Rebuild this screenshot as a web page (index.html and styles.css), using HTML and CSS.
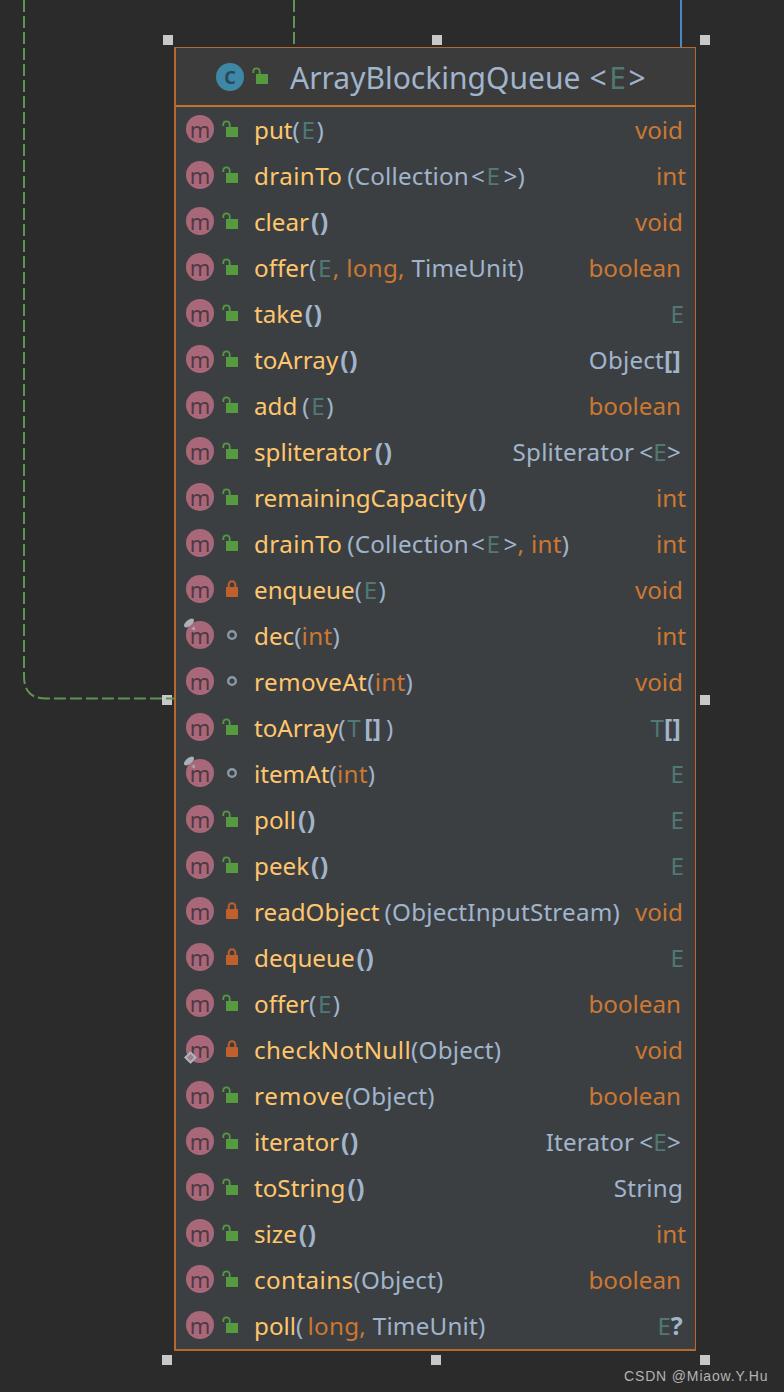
FILE: index.html
```html
<!DOCTYPE html>
<html lang="en">
<head>
  <meta charset="UTF-8" />
  <meta name="viewport" content="width=device-width, initial-scale=1.0"/>
  <title>ArrayBlockingQueue</title>
  <link rel="stylesheet" href="styles.css">
</head>
<body>
  <svg class="defs" width="0" height="0">
    <symbol id="open" viewBox="0 0 18 18">
      <rect x="4" y="7" width="12" height="10" fill="#559a3e"/>
      <path d="M1.3 6V4.5a3.2 3.2 0 0 1 6.4 0V7" fill="none" stroke="#559a3e" stroke-width="1.8"/>
    </symbol>
    <symbol id="closed" viewBox="0 0 18 18">
      <rect x="4" y="7" width="12" height="10" rx="1" fill="#c0602c"/>
      <path d="M6.7 7.5V4.5a3.3 3.3 0 0 1 6.6 0V7.5" fill="none" stroke="#c0602c" stroke-width="2"/>
    </symbol>
    <symbol id="pkg" viewBox="0 0 18 18">
      <circle cx="10" cy="9" r="3.8" fill="none" stroke="#8b99a5" stroke-width="2.4"/>
    </symbol>
  </svg>

  <div class="canvas">
    <span class="handle h1"></span>
    <span class="handle h2"></span>
    <span class="handle h3"></span>
    <span class="handle h4"></span>
    <span class="handle h5"></span>
    <span class="handle h6"></span>
    <span class="handle h7"></span>
    <span class="handle h8"></span>

    <svg class="edges" width="784" height="1392">
      <path class="edge-green" d="M24 0V676C24 690 30 698.5 46 698.5H175"/>
      <path class="edge-green" d="M294 0V47"/>
      <path class="edge-blue" d="M681 0V47"/>
    </svg>

    <div class="node">
      <div class="node-head">
        <span class="class-icon">C</span>
        <svg class="vis head-vis"><use href="#open"/></svg>
        <span class="title">ArrayBlockingQueue<span class="p title-lt">&lt;</span><span class="g title-e">E</span><span class="p">&gt;</span></span>
      </div>
      <div class="rows">
        <div class="row"><span class="m">m</span><svg class="vis"><use href="#open"/></svg><span class="sig"><span class="n">put</span><span class="p">(</span><span class="g">E</span><span class="p">)</span></span><span class="ret">void</span></div>
        <div class="row"><span class="m">m</span><svg class="vis"><use href="#open"/></svg><span class="sig"><span class="n wide">drainTo</span><span class="p sp">(Collection</span><span class="p lt">&lt;</span><span class="g">E</span><span class="p gt">&gt;)</span></span><span class="ret ret-int">int</span></div>
        <div class="row"><span class="m">m</span><svg class="vis"><use href="#open"/></svg><span class="sig"><span class="n">clear</span><span class="p b">()</span></span><span class="ret">void</span></div>
        <div class="row"><span class="m">m</span><svg class="vis"><use href="#open"/></svg><span class="sig"><span class="n">offer</span><span class="p">(</span><span class="g">E</span><span class="k">, long, </span><span class="p">TimeUnit)</span></span><span class="ret ret-bool">boolean</span></div>
        <div class="row"><span class="m">m</span><svg class="vis"><use href="#open"/></svg><span class="sig"><span class="n">take</span><span class="p b">()</span></span><span class="ret g">E</span></div>
        <div class="row"><span class="m">m</span><svg class="vis"><use href="#open"/></svg><span class="sig"><span class="n">toArray</span><span class="p b">()</span></span><span class="ret ret-bool p">Object<span class="b">[]</span></span></div>
        <div class="row"><span class="m">m</span><svg class="vis"><use href="#open"/></svg><span class="sig"><span class="n">add</span><span class="p sp">(</span><span class="g">E</span><span class="p">)</span></span><span class="ret ret-bool">boolean</span></div>
        <div class="row"><span class="m">m</span><svg class="vis"><use href="#open"/></svg><span class="sig"><span class="n">spliterator</span><span class="p b sp">()</span></span><span class="ret ret-bool p">Spliterator<span class="sp">&lt;</span><span class="g">E</span>&gt;</span></div>
        <div class="row"><span class="m">m</span><svg class="vis"><use href="#open"/></svg><span class="sig"><span class="n">remainingCapacity</span><span class="p b">()</span></span><span class="ret ret-int">int</span></div>
        <div class="row"><span class="m">m</span><svg class="vis"><use href="#open"/></svg><span class="sig"><span class="n wide">drainTo</span><span class="p sp">(Collection</span><span class="p lt">&lt;</span><span class="g">E</span><span class="p gt">&gt;</span><span class="k">, int</span><span class="p">)</span></span><span class="ret ret-int">int</span></div>
        <div class="row"><span class="m">m</span><svg class="vis"><use href="#closed"/></svg><span class="sig"><span class="n">enqueue</span><span class="p">(</span><span class="g">E</span><span class="p">)</span></span><span class="ret">void</span></div>
        <div class="row"><span class="m pinned">m</span><svg class="vis"><use href="#pkg"/></svg><span class="sig"><span class="n">dec</span><span class="p">(</span><span class="k">int</span><span class="p">)</span></span><span class="ret ret-int">int</span></div>
        <div class="row"><span class="m">m</span><svg class="vis"><use href="#pkg"/></svg><span class="sig"><span class="n wide">removeAt</span><span class="p">(</span><span class="k">int</span><span class="p">)</span></span><span class="ret">void</span></div>
        <div class="row"><span class="m">m</span><svg class="vis"><use href="#open"/></svg><span class="sig"><span class="n">toArray</span><span class="p">(</span><span class="g">T</span><span class="p b">[]</span><span class="p sp">)</span></span><span class="ret ret-bool"><span class="g">T</span><span class="p b">[]</span></span></div>
        <div class="row"><span class="m pinned">m</span><svg class="vis"><use href="#pkg"/></svg><span class="sig"><span class="n">itemAt</span><span class="p">(</span><span class="k">int</span><span class="p">)</span></span><span class="ret g">E</span></div>
        <div class="row"><span class="m">m</span><svg class="vis"><use href="#open"/></svg><span class="sig"><span class="n">poll</span><span class="p b">()</span></span><span class="ret g">E</span></div>
        <div class="row"><span class="m">m</span><svg class="vis"><use href="#open"/></svg><span class="sig"><span class="n">peek</span><span class="p b">()</span></span><span class="ret g">E</span></div>
        <div class="row"><span class="m">m</span><svg class="vis"><use href="#closed"/></svg><span class="sig"><span class="n">readObject</span><span class="p sp">(ObjectInputStream)</span></span><span class="ret">void</span></div>
        <div class="row"><span class="m">m</span><svg class="vis"><use href="#closed"/></svg><span class="sig"><span class="n">dequeue</span><span class="p b">()</span></span><span class="ret g">E</span></div>
        <div class="row"><span class="m">m</span><svg class="vis"><use href="#open"/></svg><span class="sig"><span class="n">offer</span><span class="p">(</span><span class="g">E</span><span class="p">)</span></span><span class="ret ret-bool">boolean</span></div>
        <div class="row"><span class="m static">m</span><svg class="vis"><use href="#closed"/></svg><span class="sig"><span class="n wide">checkNotNull</span><span class="p">(Object)</span></span><span class="ret">void</span></div>
        <div class="row"><span class="m">m</span><svg class="vis"><use href="#open"/></svg><span class="sig"><span class="n wider">remove</span><span class="p">(Object)</span></span><span class="ret ret-bool">boolean</span></div>
        <div class="row"><span class="m">m</span><svg class="vis"><use href="#open"/></svg><span class="sig"><span class="n">iterator</span><span class="p b">()</span></span><span class="ret ret-bool p">Iterator<span class="sp">&lt;</span><span class="g">E</span>&gt;</span></div>
        <div class="row"><span class="m">m</span><svg class="vis"><use href="#open"/></svg><span class="sig"><span class="n">toString</span><span class="p b">()</span></span><span class="ret p">String</span></div>
        <div class="row"><span class="m">m</span><svg class="vis"><use href="#open"/></svg><span class="sig"><span class="n">size</span><span class="p b">()</span></span><span class="ret ret-int">int</span></div>
        <div class="row"><span class="m">m</span><svg class="vis"><use href="#open"/></svg><span class="sig"><span class="n wide">contains</span><span class="p">(Object)</span></span><span class="ret ret-bool">boolean</span></div>
        <div class="row"><span class="m">m</span><svg class="vis"><use href="#open"/></svg><span class="sig"><span class="n">poll</span><span class="p">(</span><span class="k lead">long, </span><span class="p">TimeUnit)</span></span><span class="ret"><span class="g">E</span><span class="p b">?</span></span></div>
      </div>
    </div>

    <div class="watermark">CSDN @Miaow.Y.Hu</div>
  </div>
</body>
</html>
```
FILE: styles.css
```css
body {
  margin: 0;
  background: #2b2b2b;
  font-family: 'Noto Sans', 'Open Sans', sans-serif;
}

.defs {
  position: absolute;
}

.canvas {
  position: relative;
  width: 784px;
  height: 1392px;
  overflow: hidden;
}

.edges {
  position: absolute;
  left: 0;
  top: 0;
}

.edge-green {
  fill: none;
  stroke: #639350;
  stroke-width: 2;
  stroke-dasharray: 12 4;
}

.edge-blue {
  fill: none;
  stroke: #4a88c7;
  stroke-width: 2;
}

.node {
  position: absolute;
  left: 174px;
  top: 47px;
  width: 522px;
  box-sizing: border-box;
  background: #3c3f41;
  border: 1px solid #b5692e;
  border-left-width: 2px;
  border-bottom-width: 2px;
}

.node-head {
  display: flex;
  align-items: center;
  height: 57px;
  padding-left: 40px;
  background: #3b3b3b;
  border-bottom: 2px solid #c0722f;
}

.class-icon {
  display: flex;
  align-items: center;
  justify-content: center;
  width: 28px;
  height: 28px;
  border-radius: 50%;
  background: #3f87a6;
  color: #2a4658;
  font-size: 18px;
  font-weight: 700;
}

.head-vis {
  margin: 1px 0 0 8px;
}

.title {
  margin: 2px 0 0 20px;
  font-size: 30px;
  color: #a0b4cc;
  white-space: nowrap;
}

.title-lt {
  margin-left: 9px;
}

.title-e {
  margin: 0 2.5px;
}

.rows {
  display: flex;
  flex-direction: column;
}

.row {
  display: flex;
  align-items: center;
  height: 46px;
  padding: 0 12px 0 10px;
  font-size: 24.2px;
  white-space: pre;
}

.m {
  position: relative;
  display: flex;
  align-items: center;
  justify-content: center;
  flex: none;
  width: 28px;
  height: 28px;
  margin-top: -2px;
  border-radius: 50%;
  background: #a9687a;
  color: #4f3a44;
  font-size: 22px;
  line-height: 1;
}

.pinned::before {
  content: "";
  position: absolute;
  left: -3px;
  top: -1px;
  width: 12px;
  height: 6px;
  border-radius: 50%;
  background: #a9b2ba;
  transform: rotate(-40deg);
}

.pinned::after {
  content: "";
  position: absolute;
  left: 6px;
  top: 6px;
  border-top: 2px solid transparent;
  border-left: 4px solid #b3a6b0;
  border-bottom: 2px solid transparent;
  transform: rotate(50deg);
}

.static::after {
  content: "";
  position: absolute;
  left: 0;
  top: 18px;
  width: 9px;
  height: 9px;
  box-sizing: border-box;
  background: #a08088;
  border: 2.5px solid #a9b5bf;
  transform: rotate(45deg);
}

.vis {
  flex: none;
  width: 18px;
  height: 18px;
  margin-top: -2px;
  margin-left: 8px;
}

.sig {
  margin: -2px 0 0 14px;
}

.ret {
  margin-top: -2px;
  margin-left: auto;
  color: #cc7832;
}

.ret-int {
  margin-right: -3px;
}

.ret-bool {
  margin-right: 2px;
}

.n {
  color: #ffc66d;
}

.wide {
  letter-spacing: 0.4px;
}

.wider {
  letter-spacing: 0.8px;
}

.p {
  color: #a0b4cc;
  letter-spacing: 0.2px;
}

.g,
.ret.g {
  color: #507874;
}

.ret.g {
  margin-right: -1px;
}

.sig .g {
  margin: 0 1.5px;
}

.k {
  color: #cc7832;
  letter-spacing: 0.3px;
}

.lead {
  margin-left: 4px;
}

.b {
  font-size: 25px;
  font-weight: 700;
}

.sig .b {
  margin-left: 2px;
}

.sp,
.sig .sp {
  margin-left: 5px;
}

.sig .b.sp {
  margin-left: 3px;
}

.lt {
  margin-left: 2px;
}

.gt {
  margin-left: 2px;
}

.ret.p {
  color: #a0b4cc;
}

.handle {
  position: absolute;
  width: 10px;
  height: 10px;
  background: #c8c8c8;
}

.h1 { left: 163px; top: 35px; }
.h2 { left: 432px; top: 35px; }
.h3 { left: 700px; top: 35px; }
.h4 { left: 162px; top: 695px; }
.h5 { left: 700px; top: 695px; }
.h6 { left: 162px; top: 1355px; }
.h7 { left: 431px; top: 1355px; }
.h8 { left: 700px; top: 1355px; }

.watermark {
  position: absolute;
  left: 624px;
  top: 1368px;
  font-family: 'Liberation Sans', sans-serif;
  font-size: 14px;
  letter-spacing: 0.85px;
  color: #b3b3b3;
}
```
